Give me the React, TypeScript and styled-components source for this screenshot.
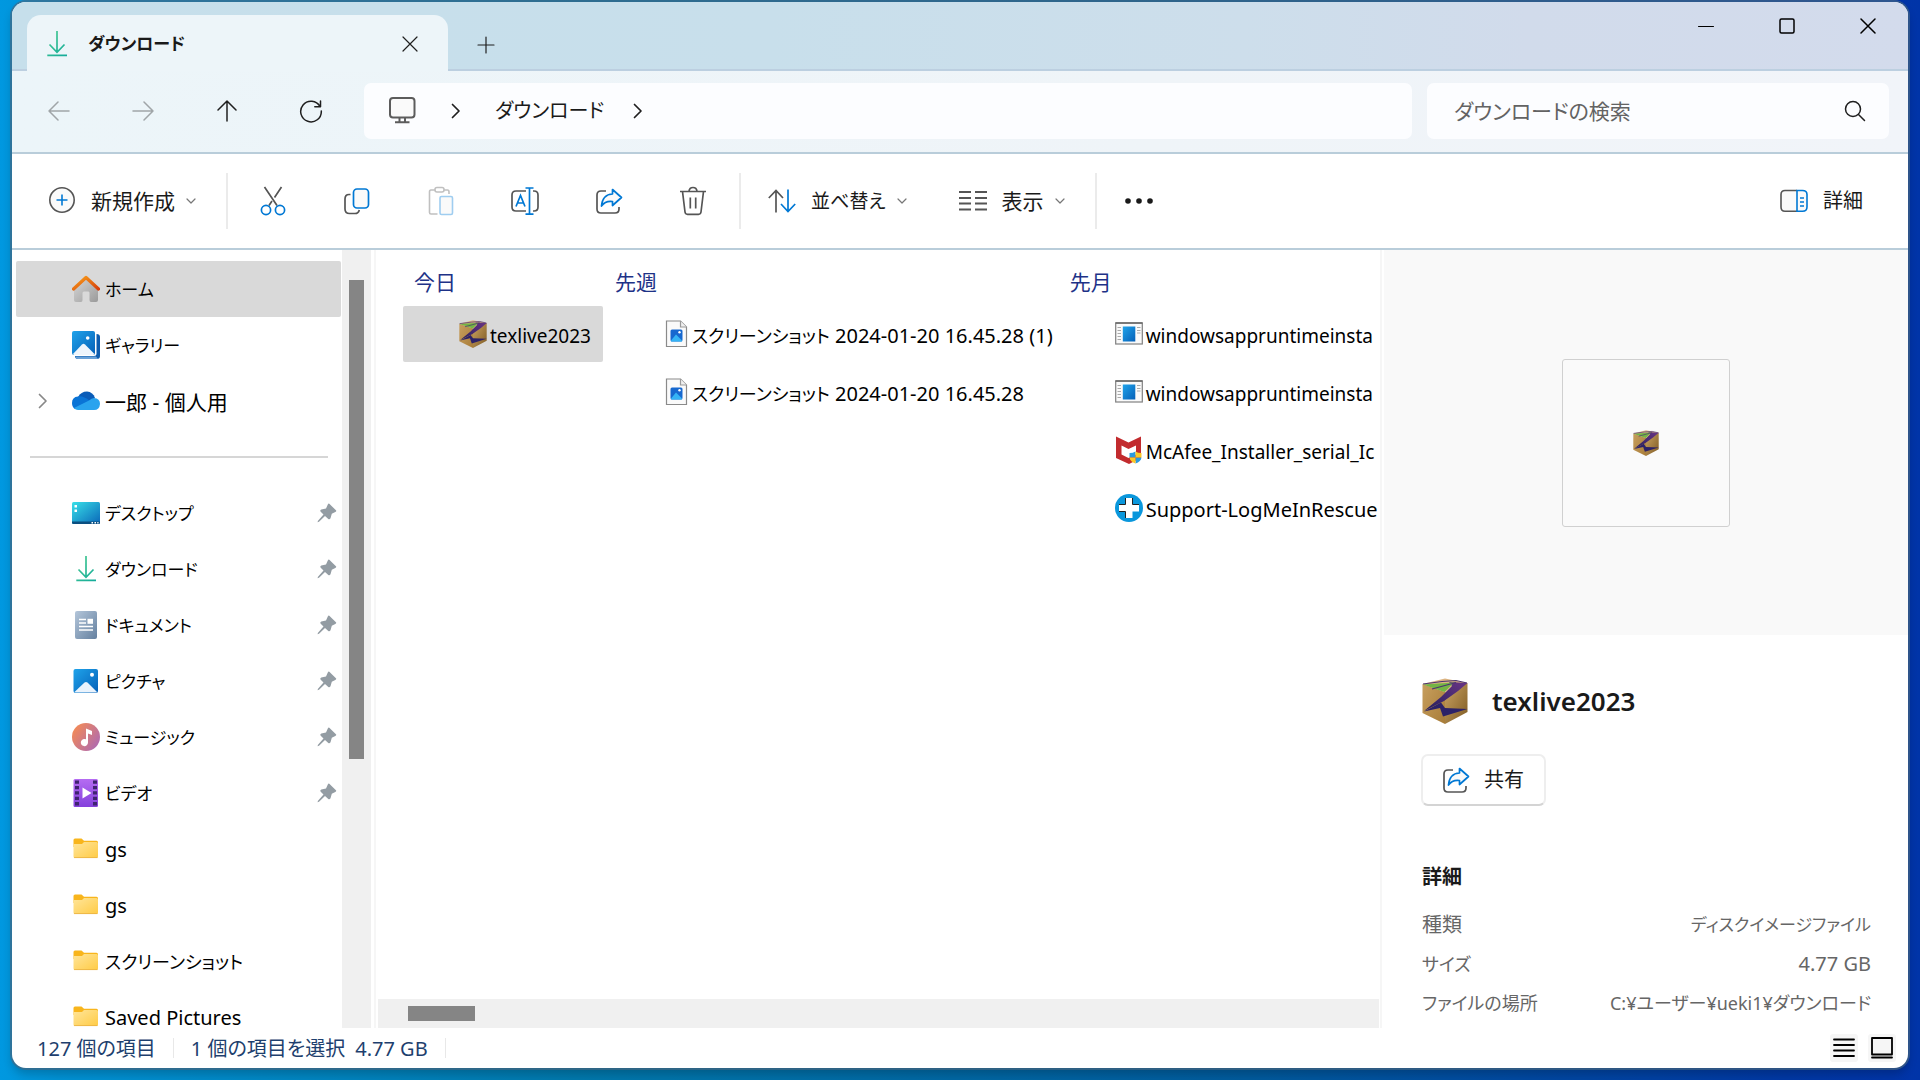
import React from 'react';
import styled, { createGlobalStyle } from 'styled-components';

const Global = createGlobalStyle`
  *, *::before, *::after { box-sizing: border-box; }
  html, body, #root { height: 100%; }
  body {
    margin: 0;
    overflow: hidden;
    font-family: 'Noto Sans', 'Noto Sans CJK JP', sans-serif;
    font-size: 19px;
    line-height: 28px;
    color: #1a1a1a;
    font-feature-settings: 'palt';
  }
  button, input { font: inherit; font-feature-settings: inherit; color: inherit; }
  button { background: none; border: 0; padding: 0; margin: 0; }
  ul, dl, dd, h2, h3 { margin: 0; padding: 0; }
  ul { list-style: none; }
  a { color: inherit; text-decoration: none; }
  svg { display: block; flex: none; }
`;

const Desktop = styled.div`
  height: 100vh;
  padding: 2px 12px 12px;
  background: linear-gradient(90deg, #0098e0 0%, #0091d4 3%, #0078ac 30%, #005a9c 65%, #0038a4 93%, #0034a8 100%);
`;

const Window = styled.div`
  height: 100%;
  display: flex;
  flex-direction: column;
  overflow: hidden;
  border-radius: 14px;
  background: #fff;
  box-shadow: 0 0 0 2px rgba(70, 105, 130, 0.65), 0 6px 10px rgba(0, 0, 0, 0.2);
`;

const TitleBar = styled.header`
  display: flex;
  height: 69px;
  padding-left: 15px;
  background: linear-gradient(90deg, #c6dfeb 0%, #c8dfeb 40%, #cddeeb 65%, #d1dbeb 80%, #d3dbec 100%);
  border-bottom: 2px solid #bccfe0;
`;

const Tab = styled.div`
  display: flex;
  align-items: center;
  width: 421px;
  height: 57px;
  margin-top: 13px;
  margin-bottom: -2px;
  padding: 0 26px 0 16px;
  border-radius: 14px 14px 0 0;
  background: #edf5f9;
  font-weight: 600;
  font-size: 17px;
`;

const TabName = styled.span`
  flex: 1;
  padding-left: 17px;
`;

const NewTab = styled.button`
  width: 48px;
  margin: 18px 0 0 14px;
  display: grid;
  place-items: center;
`;

const IconButton = styled.button<{ $w: number }>`
  width: ${(p) => p.$w}px;
  display: grid;
  place-items: center;
`;

const Captions = styled.div`
  margin-left: auto;
  display: flex;
  height: 48px;
`;

const NavBar = styled.nav`
  display: flex;
  align-items: center;
  height: 83px;
  padding: 0 19px 2px 5px;
  background: linear-gradient(90deg, #ecf5f9, #eff4f8 60%, #f1f4f9);
  border-bottom: 2px solid #b9cdda;
`;

const AddressBar = styled.div`
  flex: 1;
  display: flex;
  align-items: center;
  height: 56px;
  margin-left: 11px;
  padding-left: 24px;
  border-radius: 7px;
  background: #fcfdff;
  font-size: 20px;
`;

const Crumb = styled.a`
  margin: 0 29px 0 34px;
`;

const CrumbChevron = styled.span`
  margin-left: 35px;
`;

const SearchBox = styled.label`
  display: flex;
  align-items: center;
  width: 462px;
  height: 56px;
  margin-left: 15px;
  padding: 0 23px 0 25px;
  border-radius: 7px;
  background: #fcfdff;
`;

const SearchInput = styled.input`
  flex: 1;
  min-width: 0;
  border: 0;
  outline: 0;
  background: none;
  font-size: 21px;
  &::placeholder { color: #636363; opacity: 1; }
`;

const Toolbar = styled.div`
  display: flex;
  align-items: center;
  height: 96px;
  padding-right: 45px;
  border-bottom: 2px solid #b9cdda;
`;

const MenuButton = styled.button<{ $left: number; $size?: number }>`
  display: flex;
  align-items: center;
  height: 56px;
  padding: 0 30px 0 ${(p) => p.$left}px;
  font-size: ${(p) => p.$size ?? 21}px;
`;

const MenuLabel = styled.span`
  margin: 0 11px 0 15px;
`;

const Separator = styled.div`
  width: 2px;
  height: 56px;
  background: #ebebeb;
`;

const IconGroup = styled.div`
  display: flex;
  padding: 0 4px 0 3px;
`;

const DetailsToggle = styled.button`
  display: flex;
  align-items: center;
  gap: 15px;
  height: 56px;
  margin-left: auto;
  font-size: 20px;
`;

const Main = styled.main`
  flex: 1;
  min-height: 0;
  display: flex;
`;

const Sidebar = styled.aside`
  width: 330px;
  flex: none;
  padding: 11px 0 0 4px;
  overflow: hidden;
`;

const SideLink = styled.a<{ $active?: boolean }>`
  display: flex;
  align-items: center;
  width: 325px;
  height: 56px;
  padding: 0 4px 0 19px;
  border-radius: 2px;
  color: #000;
  background: ${(p) => (p.$active ? '#d9d9d9' : 'transparent')};
`;

const Expander = styled.span`
  width: 37px;
  padding-left: 3px;
`;

const SideName = styled.span<{ $size: number }>`
  flex: 1;
  padding: 2px 0 0 5px;
  font-size: ${(p) => p.$size}px;
  line-height: 20px;
`;

const Divider = styled.hr`
  width: 298px;
  margin: 27px 0 27px 14px;
  border: 0;
  height: 2px;
  background: #d6d6d6;
`;

const VTrack = styled.div`
  width: 29px;
  flex: none;
  padding: 30px 7px 0;
  background: #f0f0f0;
`;

const VThumb = styled.div`
  width: 15px;
  height: 479px;
  background: #858585;
`;

const Rule = styled.div<{ $before: number }>`
  width: 2px;
  flex: none;
  margin: 0 2px 0 ${(p) => p.$before}px;
  background: #f6f6f6;
`;

const Content = styled.section`
  flex: 1;
  min-width: 0;
  display: flex;
  flex-direction: column;
`;

const Groups = styled.div`
  flex: 1;
  display: flex;
  overflow: hidden;
  padding-left: 25px;
`;

const Group = styled.div`
  flex: none;
`;

const GroupTitle = styled.h3<{ $indent: number }>`
  margin: 18px 0 10px;
  padding-left: ${(p) => p.$indent}px;
  font-size: 21px;
  font-weight: 400;
  line-height: 28px;
  color: #1e3287;
`;

const FileRow = styled.a<{ $left: number; $right: number; $selected?: boolean }>`
  display: flex;
  align-items: center;
  height: 56px;
  margin-bottom: 2px;
  padding: 0 ${(p) => p.$right}px 0 ${(p) => p.$left}px;
  border-radius: 2px;
  white-space: nowrap;
  color: #000;
  background: ${(p) => (p.$selected ? '#d9d9d9' : 'transparent')};
`;

const FileName = styled.span<{ $size?: number }>`
  padding: 3px 0 0 3px;
  font-size: ${(p) => p.$size ?? 19}px;
`;

const Kana = styled.span`
  font-size: 18px;
`;

const HTrack = styled.div`
  height: 29px;
  padding: 7px 30px;
  background: #f0f0f0;
`;

const HThumb = styled.div`
  width: 67px;
  height: 15px;
  background: #858585;
`;

const Details = styled.aside`
  width: 524px;
  flex: none;
`;

const Preview = styled.div`
  display: grid;
  place-items: center;
  height: 385px;
  background: #f9f9f9;
`;

const Thumb = styled.div`
  display: grid;
  place-items: center;
  width: 168px;
  height: 168px;
  border: 1px solid #d0d0d0;
  border-radius: 3px;
  background: #fafafa;
`;

const Info = styled.div`
  padding: 41px 37px 0 38px;
`;

const Heading = styled.div`
  display: flex;
  align-items: center;
  gap: 24px;
  height: 50px;
`;

const Name = styled.h2`
  font-size: 26px;
  font-weight: 600;
  line-height: 36px;
`;

const ShareButton = styled.button`
  display: flex;
  align-items: center;
  gap: 14px;
  height: 52px;
  margin: 28px 0 57px -1px;
  padding: 0 20px 0 19px;
  border: 2px solid #eeeeee;
  border-bottom-color: #d4d4d4;
  border-radius: 7px;
  font-size: 20px;
`;

const SectionTitle = styled.h3`
  font-size: 20px;
  font-weight: 700;
  line-height: 28px;
`;

const Facts = styled.dl`
  margin-top: 14px;
  color: #666;
`;

const Fact = styled.div`
  display: flex;
  justify-content: space-between;
  height: 39px;
  align-items: center;
`;

const Term = styled.dt<{ $size: number }>`
  font-size: ${(p) => p.$size}px;
`;

const Value = styled.dd<{ $size: number }>`
  font-size: ${(p) => p.$size}px;
`;

const StatusBar = styled.footer`
  display: flex;
  align-items: center;
  height: 40px;
  padding: 0 12px 0 25px;
  font-size: 20px;
  color: #1e3f6e;
`;

const StatusItem = styled.span`
  display: flex;
  gap: 10px;
  padding: 2px 17px 0 0;
  margin-right: 17px;
  border-right: 1px solid #e8e8e8;
  line-height: 18px;
`;

const ViewButtons = styled.div`
  display: flex;
  gap: 10px;
  margin-left: auto;
`;

const ViewButton = styled.button`
  display: grid;
  place-items: center;
  width: 28px;
  height: 28px;
  border-radius: 3px;
  background: #f6f6f6;
`;

/* ---------- drawings ---------- */

const Line: React.FC<{ d: string; w: number; h: number; c?: string; s?: number }> = ({ d, w, h, c = '#1f1f1f', s = 1.5 }) => (
  <svg width={w} height={h} viewBox={`0 0 ${w} ${h}`} fill="none" stroke={c} strokeWidth={s} strokeLinecap="round" strokeLinejoin="round">
    <path d={d} />
  </svg>
);

const DownloadIcon = () => (
  <svg width="28" height="28" viewBox="0 0 28 28" fill="none" stroke="url(#dl)" strokeWidth="1.7">
    <defs>
      <linearGradient id="dl" x1="0" y1="0" x2="28" y2="28" gradientUnits="userSpaceOnUse">
        <stop offset="0" stopColor="#52d08f" /><stop offset="1" stopColor="#0ba69c" />
      </linearGradient>
    </defs>
    <path d="M14 1V22M6.5 14.5L14 22.3L21.5 14.5M4.3 25.3H24" />
  </svg>
);

const ChevronDown = () => <Line w={10} h={6} d="M1 1L5 5L9 1" c="#777" s={1.2} />;
const ChevronRight: React.FC<{ c?: string }> = ({ c }) => <Line w={10} h={16} d="M1.5 1.5L8 8L1.5 14.5" c={c} s={1.7} />;

const PlusCircle = () => (
  <svg width="28" height="28" viewBox="0 0 28 28" fill="none" strokeWidth="1.6">
    <circle cx="14" cy="13" r="12.2" stroke="#555" fill="#fafafa" />
    <path d="M14 7.5V18.5M8.5 13H19.5" stroke="#0078d4" />
  </svg>
);

const CutIcon = () => (
  <svg width="28" height="30" viewBox="0 0 28 30" fill="none" strokeWidth="1.7">
    <path d="M5.5 1L18 19.5M22.5 1L15.5 11.5M13 15L10 19.5" stroke="#555" />
    <circle cx="7" cy="24" r="4.6" stroke="#0078d4" />
    <circle cx="21" cy="24" r="4.6" stroke="#0078d4" />
  </svg>
);

const CopyIcon = () => (
  <svg width="28" height="28" viewBox="0 0 28 28" fill="none" strokeWidth="1.7">
    <path d="M7.5 7.5H6Q2 7.5 2 12V22Q2 26.5 6.5 26.5H12Q15.5 26.5 16.3 23" stroke="#555" />
    <rect x="10.5" y="2" width="15" height="19" rx="3.5" stroke="#0078d4" fill="#fafafa" />
  </svg>
);

const PasteIcon = () => (
  <svg width="28" height="30" viewBox="0 0 28 30" fill="none" strokeWidth="1.6">
    <path d="M8 4H4Q2.5 4 2.5 6V26.5Q2.5 28 4 28H10.5M17 4H20.5Q22 4 22 6V8" stroke="#c0c0c0" />
    <rect x="8" y="1.5" width="9" height="4.5" rx="2" stroke="#c0c0c0" />
    <rect x="13" y="10.5" width="12.5" height="18" rx="1.5" stroke="#9fcdf0" fill="#fafafa" />
  </svg>
);

const RenameIcon = () => (
  <svg width="28" height="28" viewBox="0 0 28 28" fill="none" strokeWidth="1.7">
    <path d="M15 4H5Q1 4 1 8V20Q1 24 5 24H15M22 4H23Q27 4 27 8V20Q27 24 23 24H22" stroke="#555" />
    <path d="M14.5 1H22.5M14.5 27.2H22.5M18.5 1V27" stroke="#0078d4" />
    <path d="M5 19.5L9.5 8.5L14 19.5M6.5 16H12.5" stroke="#0078d4" />
  </svg>
);

const ShareIcon = () => (
  <svg width="28" height="28" viewBox="0 0 28 28" fill="none" strokeWidth="1.7" strokeLinejoin="round">
    <path d="M11 4H6Q2 4 2 8V22Q2 26 6 26H20Q24 26 24 22V20" stroke="#555" />
    <path d="M17.5 2.5L26.5 10.5L17.5 18.5V14.500Q10.500 13.500 6.5 19Q7.5 7.500 17.5 7Z" stroke="#0078d4" fill="#fafafa" />
  </svg>
);

const TrashIcon = () => (
  <svg width="28" height="30" viewBox="0 0 28 30" fill="none" stroke="#555" strokeWidth="1.7">
    <path d="M1 5.5H27M10 5.2Q10.5 1.5 14 1.5T18 5.2M3.5 5.5L6 26Q6.3 28.3 8.5 28.3H19.5Q21.7 28.3 22 26L24.5 5.5M11.3 11.5V22.5M16.7 11.5V22.5" />
  </svg>
);

const SortIcon = () => (
  <svg width="28" height="24" viewBox="0 0 28 24" fill="none" strokeWidth="1.7">
    <path d="M8 23.5V2M0.8 9L8 1.5L15 9" stroke="#555" />
    <path d="M20 0.5V22M13 15L20 22.5L27.2 15" stroke="#0078d4" />
  </svg>
);

const ViewIcon = () => (
  <svg width="28" height="20" viewBox="0 0 28 20" fill="none" stroke="#555" strokeWidth="1.8">
    <path d="M0 1H12M0 7H12M0 12.500H12M0 18.500H12M16 1H28M16 7H28M16 12.500H28M16 18.500H28" />
  </svg>
);

const MoreIcon = () => (
  <svg width="30" height="8" viewBox="0 0 30 8" fill="#1a1a1a">
    <circle cx="4" cy="4" r="2.8" /><circle cx="15" cy="4" r="2.8" /><circle cx="26" cy="4" r="2.8" />
  </svg>
);

const PaneIcon = () => (
  <svg width="28" height="24" viewBox="0 0 28 24" fill="#fafafa" strokeWidth="1.6">
    <path d="M17 1.5H5Q1 1.5 1 5.5V18Q1 22.3 5 22.3H17" stroke="#555" />
    <path d="M17 1.5H22.5Q27 1.5 27 5.5V18Q27 22.3 22.5 22.3H17Z" stroke="#0078d4" />
    <path d="M20 9H24M20 13H24M20 17H24" stroke="#0078d4" />
  </svg>
);

const MonitorIcon = () => (
  <svg width="28" height="30" viewBox="0 0 28 30" fill="none" stroke="#5c5c5c" strokeWidth="2">
    <rect x="2" y="2" width="24.5" height="19.5" rx="3" fill="#fafafa" />
    <path d="M11.5 21.5V26M17 21.5V26M7 26.3H21.5" />
  </svg>
);

const HomeIcon = () => (
  <svg width="28" height="28" viewBox="0 0 28 28">
    <defs>
      <linearGradient id="hm" x1="0" y1="0" x2="1" y2="1"><stop offset="0" stopColor="#d8d8d8" /><stop offset="1" stopColor="#9a9a9a" /></linearGradient>
      <linearGradient id="hr" x1="0" y1="0" x2="1" y2="1"><stop offset="0" stopColor="#f9a11b" /><stop offset="1" stopColor="#d63f0c" /></linearGradient>
    </defs>
    <path d="M2 14L14 3L26 14V25Q26 27 24 27H19Q17.500 27 17.500 25V18Q17.500 16.500 16.500 16.500H12Q10.500 16.500 10.500 18V25Q10.500 27 9 27H4Q2 27 2 25Z" fill="url(#hm)" />
    <path d="M1.500 14L14 2.500L26.500 14" fill="none" stroke="url(#hr)" strokeWidth="3.300" strokeLinecap="round" strokeLinejoin="round" />
  </svg>
);

const BlueGradient: React.FC<{ id: string }> = ({ id }) => (
  <linearGradient id={id} x1="0" y1="0" x2="1" y2="1"><stop offset="0" stopColor="#1fa3ea" /><stop offset="1" stopColor="#0560b8" /></linearGradient>
);

const GalleryIcon = () => (
  <svg width="28" height="28" viewBox="0 0 28 28">
    <defs><BlueGradient id="ga" /></defs>
    <path d="M24.500 3Q28 3 28 6V25Q28 28 25 28H6Q3 28 3 25H22Q24.500 25 24.500 22.500Z" fill="#0d5cae" />
    <path d="M3.500 25.500H24L26 28H6Q3.500 28 3.500 25.500Z" fill="#6ba2d8" />
    <rect x="0" y="0" width="23" height="24" rx="2" fill="url(#ga)" />
    <path d="M1 23L10 13.500Q11.500 12 13 13.500L22.500 23Q22 24 21 24H2Z" fill="#eef5fc" />
    <circle cx="15.700" cy="7" r="1.800" fill="#fff" />
  </svg>
);

const CloudIcon = () => (
  <svg width="28" height="20" viewBox="0 0 28 20">
    <path d="M6 6Q9 0.500 15 0.500Q21 1 23 7L15 13Z" fill="#0a5cb8" />
    <path d="M6 5.500Q0 6 0 12Q0 16 3 18L18 10Q11 4.500 6 5.500Z" fill="#0a74d6" />
    <path d="M22 7Q28 7.500 28 13Q27.500 19 22 19H6Q3.500 19 2 17L17 9.500Q19.500 7 22 7Z" fill="#29a3ee" />
  </svg>
);

const DesktopIcon = () => (
  <svg width="28" height="22" viewBox="0 0 28 22">
    <defs><linearGradient id="dk" x1="0" y1="0" x2="1" y2="1"><stop offset="0" stopColor="#38e0e8" /><stop offset="1" stopColor="#0a66b8" /></linearGradient></defs>
    <rect width="28" height="22" rx="1.500" fill="url(#dk)" />
    <path d="M0 19.500H28V20.500Q28 22 26.500 22H1.500Q0 22 0 20.500Z" fill="#0b4f80" />
    <path d="M2.500 3H5V5.500H2.500ZM2.500 7.500H5V10H2.500ZM19.500 20H21V21.500H19.500ZM22.500 20H24V21.500H22.500ZM25.300 20H26.500V21.500H25.300Z" fill="#fff" />
  </svg>
);

const DocumentIcon = () => (
  <svg width="28" height="28" viewBox="0 0 28 28">
    <defs><linearGradient id="dc" x1="0" y1="0" x2="1" y2="1"><stop offset="0" stopColor="#b4c6da" /><stop offset="1" stopColor="#64809f" /></linearGradient></defs>
    <rect x="3" y="0" width="22" height="28" rx="2" fill="url(#dc)" />
    <path d="M7 8.500H14M7 12H14M7 15.500H21M7 19H21" stroke="#fff" strokeWidth="1.500" />
    <rect x="15.500" y="7.800" width="5.500" height="5" fill="#fff" />
  </svg>
);

const PictureIcon = () => (
  <svg width="28" height="28" viewBox="0 0 28 28">
    <defs><BlueGradient id="pi" /></defs>
    <rect x="1.500" y="2" width="24.500" height="24" rx="2" fill="url(#pi)" />
    <path d="M2.500 25L12.500 15.500Q14 14.300 15.500 15.500L25 25Q24.500 25.500 24 25.500H3.500Z" fill="#eaf3fc" />
    <circle cx="20" cy="7.800" r="2" fill="#fff" />
  </svg>
);

const MusicIcon = () => (
  <svg width="28" height="28" viewBox="0 0 28 28">
    <defs><linearGradient id="mu" x1="0" y1="0.200" x2="1" y2="0.900"><stop offset="0" stopColor="#f58b54" /><stop offset="1" stopColor="#a968b8" /></linearGradient></defs>
    <circle cx="14" cy="14" r="14" fill="url(#mu)" />
    <path d="M14 5.500L20 8V12L16 10.500V19.500A3.600 3.600 0 1 1 14 16.300Z" fill="#fff" />
  </svg>
);

const VideoIcon = () => (
  <svg width="28" height="28" viewBox="0 0 28 28">
    <defs><linearGradient id="vi" x1="0" y1="0" x2="0" y2="1"><stop offset="0" stopColor="#b56cf2" /><stop offset="1" stopColor="#8440dc" /></linearGradient></defs>
    <rect x="1.500" y="0" width="24.500" height="28" rx="1.500" fill="url(#vi)" />
    <path d="M5 1.500V28M23 1.500V28" stroke="#3f2370" strokeWidth="4" strokeDasharray="3.300 2.100" />
    <path d="M10.500 8.500L19.500 14L10.500 19.500Z" fill="#fff" />
  </svg>
);

const FolderIcon = () => (
  <svg width="28" height="22" viewBox="0 0 28 22">
    <defs><linearGradient id="fo" x1="0" y1="0" x2="1" y2="1"><stop offset="0" stopColor="#ffe59a" /><stop offset="1" stopColor="#ffcb45" /></linearGradient></defs>
    <path d="M1.500 2Q1.500 0.500 3 0.500H9.500L12 2.800H24.500Q26 2.800 26 4.300V9H1.500Z" fill="#f8b51c" />
    <path d="M1.500 6H10L12 4H24.500Q26 4 26 5.500V18.500Q26 20 24.500 20H3Q1.500 20 1.500 18.500Z" fill="url(#fo)" />
    <path d="M2 19.600H25.500" stroke="#e8b040" strokeWidth="0.800" />
  </svg>
);

const PinIcon = () => (
  <svg width="20" height="20" viewBox="0 0 20 20" fill="#939ca3">
    <path d="M12.300 0.800L19.200 7.500Q19.500 8.500 18.300 8.900L14.800 10.800L13.500 15.300Q12.500 17 11.300 16L8 13L2 18.800L0.500 19.300L1 17.800L6.500 11.500L3.500 8.500Q2.800 7.200 4.300 6.600L9 5.500L10.800 1.500Q11.500 0.200 12.300 0.800Z" />
  </svg>
);

const BoxIcon: React.FC<{ size: number }> = ({ size }) => (
  <svg width={size} height={size} viewBox="0 0 46 46">
    <defs>
      <linearGradient id="bl" x1="0" y1="0" x2="1" y2="1"><stop offset="0" stopColor="#c79f5e" /><stop offset="1" stopColor="#a87c38" /></linearGradient>
      <linearGradient id="br" x1="0" y1="0" x2="1" y2="1"><stop offset="0" stopColor="#cba463" /><stop offset="1" stopColor="#7d5922" /></linearGradient>
      <linearGradient id="bp" x1="1" y1="0" x2="0" y2="1"><stop offset="0" stopColor="#6a3585" /><stop offset="1" stopColor="#241f5c" /></linearGradient>
    </defs>
    <path d="M0.500 6L23 0.500L45.500 5L23 14Z" fill="#dcb482" />
    <path d="M0.500 6L23 14V46L0.500 35Z" fill="url(#bl)" />
    <path d="M23 14L45.500 5V34L23 46Z" fill="url(#br)" />
    <path d="M27 4L45.500 5L36 13L22 23L2 33L19 19L30 8Z" fill="url(#bp)" />
    <path d="M1 6.500L32 4.500L22.500 14L11 10Z" fill="#74b544" />
    <path d="M1 6L20 3.500L34 2.500L45 5M10 11L34 4.500" stroke="#4d3470" strokeWidth="1.200" fill="none" />
    <path d="M2 33.500L19 24.500L23 30L45.500 31L21 38.500L18 30Z" fill="#2c2268" />
  </svg>
);

const ImageFileIcon = () => (
  <svg width="24" height="28" viewBox="0 0 24 28">
    <path d="M1.500 1H15.500L21.500 7V26.500H1.500Z" fill="#fafafa" stroke="#8a8a8a" strokeWidth="1.200" />
    <path d="M15.500 1V7H21.500" fill="#f0f0f0" stroke="#9a9a9a" strokeWidth="1.200" />
    <rect x="5.500" y="9.500" width="12" height="12" rx="1.500" fill="#1668cf" />
    <path d="M6 20.500L11 14.500L17 20.500V21.500H6Z" fill="#35b4f5" />
    <circle cx="14.500" cy="12.300" r="1.200" fill="#fff" />
  </svg>
);

const AppFileIcon = () => (
  <svg width="28" height="28" viewBox="0 0 28 28">
    <defs><BlueGradient id="ap" /></defs>
    <rect x="0.700" y="3" width="26.600" height="21" fill="#fafafa" stroke="#808080" strokeWidth="1.200" />
    <path d="M0.500 3H27.500" stroke="#666" strokeWidth="1.500" />
    <rect x="7.800" y="6.500" width="12.500" height="15" fill="url(#ap)" />
    <path d="M2.500 7.500H6M2.500 10.500H6M2.500 13.500H6M2.500 16.500H6M2.500 19.500H6M22 7.500H25.500M22 10.500H25.500M22 13H25.500" stroke="#aaa" strokeWidth="1" />
  </svg>
);

const ShieldIcon = () => (
  <svg width="28" height="28" viewBox="0 0 28 28">
    <path d="M1 0.500L13.500 6.500L26 0.500V22L14 28L1 22ZM6.500 9.500V18.500L13.500 22L21 18.500V9.500L13.500 13Z" fill="#c22b2e" fillRule="evenodd" />
    <path d="M20.500 15.500V21.500H14.500V17Q18 17 20.500 15.500ZM20.500 21.500H26.500Q26 25.500 20.500 27.500Z" fill="#2b9be0" />
    <path d="M20.500 15.500Q23 17 26.500 17V21.500H20.500ZM14.500 21.500H20.500V27.500Q15 25.500 14.500 21.500Z" fill="#fbc926" />
  </svg>
);

const RescueIcon = () => (
  <svg width="28" height="28" viewBox="0 0 28 28">
    <circle cx="14" cy="14" r="14" fill="#0a97dc" />
    <path d="M10.500 4H17.500V10.500H24V17.500H17.500V24H10.500V17.500H4V10.500H10.500Z" fill="#fff" />
    <path d="M10.500 4V10.500H4M17.500 4V10.500H24M10.500 24V17.500H4" fill="none" stroke="#222" strokeWidth="1" />
  </svg>
);

/* ---------- data ---------- */

type SideItem = { name: string; icon: React.ReactNode; size?: number; active?: boolean; expand?: boolean; pinned?: boolean };

const topItems: SideItem[] = [
  { name: 'ホーム', icon: <HomeIcon />, active: true },
  { name: 'ギャラリー', icon: <GalleryIcon /> },
  { name: '一郎 - 個人用', icon: <CloudIcon />, size: 21, expand: true },
];

const quickItems: SideItem[] = [
  { name: 'デスクトップ', icon: <DesktopIcon />, pinned: true },
  { name: 'ダウンロード', icon: <DownloadIcon />, pinned: true },
  { name: 'ドキュメント', icon: <DocumentIcon />, pinned: true },
  { name: 'ピクチャ', icon: <PictureIcon />, pinned: true },
  { name: 'ミュージック', icon: <MusicIcon />, pinned: true },
  { name: 'ビデオ', icon: <VideoIcon />, pinned: true },
  { name: 'gs', icon: <FolderIcon />, size: 20 },
  { name: 'gs', icon: <FolderIcon />, size: 20 },
  { name: 'スクリーンショット', icon: <FolderIcon />, size: 18 },
  { name: 'Saved Pictures', icon: <FolderIcon />, size: 20 },
];

const facts = [
  { term: '種類', termSize: 20, value: 'ディスクイメージファイル', valueSize: 17 },
  { term: 'サイズ', termSize: 18, value: '4.77 GB', valueSize: 20 },
  { term: 'ファイルの場所', termSize: 18, value: 'C:¥ユーザー¥ueki1¥ダウンロード', valueSize: 18 },
];

const SideList: React.FC<{ items: SideItem[] }> = ({ items }) => (
  <ul>
    {items.map((it, i) => (
      <li key={i}>
        <SideLink href="#" $active={it.active}>
          <Expander>{it.expand && <ChevronRight c="#888" />}</Expander>
          {it.icon}
          <SideName $size={it.size ?? 17}>{it.name}</SideName>
          {it.pinned && <PinIcon />}
        </SideLink>
      </li>
    ))}
  </ul>
);

export default function App() {
  return (
    <>
      <Global />
      <Desktop>
        <Window>
          <TitleBar>
            <Tab>
              <DownloadIcon />
              <TabName>ダウンロード</TabName>
              <IconButton $w={24} aria-label="タブを閉じる"><Line w={16} h={16} d="M1 1L15 15M15 1L1 15" s={1.2} /></IconButton>
            </Tab>
            <NewTab aria-label="新しいタブ"><Line w={18} h={18} d="M9 1V17M1 9H17" s={1.2} /></NewTab>
            <Captions>
              <IconButton $w={81} aria-label="最小化"><Line w={16} h={16} d="M0.5 8.5H15.5" c="#000" s={1} /></IconButton>
              <IconButton $w={81} aria-label="最大化"><Line w={16} h={16} d="M2.500 1H13.500Q15 1 15 2.500V13.500Q15 15 13.500 15H2.500Q1 15 1 13.500V2.500Q1 1 2.500 1Z" c="#000" /></IconButton>
              <IconButton $w={81} aria-label="閉じる"><Line w={16} h={16} d="M1 1L15 15M15 1L1 15" c="#000" /></IconButton>
            </Captions>
          </TitleBar>

          <NavBar>
            <IconButton $w={84} aria-label="戻る"><Line w={22} h={20} d="M21 10H1M10 1L1 10L10 19" c="#a0a5a8" /></IconButton>
            <IconButton $w={84} aria-label="進む"><Line w={22} h={20} d="M1 10H21M12 1L21 10L12 19" c="#a0a5a8" /></IconButton>
            <IconButton $w={84} aria-label="上へ"><Line w={20} h={22} d="M10 21V1M1 10L10 1L19 10" /></IconButton>
            <IconButton $w={84} aria-label="更新"><Line w={24} h={24} d="M21 7.500A10.300 10.300 0 1 0 22.300 12M21.500 2V7.700H15.800" /></IconButton>
            <AddressBar>
              <MonitorIcon />
              <CrumbChevron><ChevronRight /></CrumbChevron>
              <Crumb href="#">ダウンロード</Crumb>
              <ChevronRight />
            </AddressBar>
            <SearchBox>
              <SearchInput type="search" aria-label="ダウンロードの検索" placeholder="ダウンロードの検索" />
              <Line w={22} h={22} d="M16.500 9A7.500 7.500 0 1 1 1.500 9A7.500 7.500 0 1 1 16.500 9M14.500 14.500L20.500 20.500" />
            </SearchBox>
          </NavBar>

          <Toolbar>
            <MenuButton $left={36}><PlusCircle /><MenuLabel>新規作成</MenuLabel><ChevronDown /></MenuButton>
            <Separator />
            <IconGroup>
              <IconButton $w={84} aria-label="切り取り"><CutIcon /></IconButton>
              <IconButton $w={84} aria-label="コピー"><CopyIcon /></IconButton>
              <IconButton $w={84} aria-label="貼り付け"><PasteIcon /></IconButton>
              <IconButton $w={84} aria-label="名前の変更"><RenameIcon /></IconButton>
              <IconButton $w={84} aria-label="共有"><ShareIcon /></IconButton>
              <IconButton $w={84} aria-label="削除"><TrashIcon /></IconButton>
            </IconGroup>
            <Separator />
            <MenuButton $left={27} $size={19}><SortIcon /><MenuLabel>並べ替え</MenuLabel><ChevronDown /></MenuButton>
            <MenuButton $left={22}><ViewIcon /><MenuLabel>表示</MenuLabel><ChevronDown /></MenuButton>
            <Separator />
            <IconButton $w={84} aria-label="その他"><MoreIcon /></IconButton>
            <DetailsToggle><PaneIcon />詳細</DetailsToggle>
          </Toolbar>

          <Main>
            <Sidebar>
              <SideList items={topItems} />
              <Divider />
              <SideList items={quickItems} />
            </Sidebar>
            <VTrack><VThumb /></VTrack>
            <Rule $before={3} />
            <Content>
              <Groups>
                <Group>
                  <GroupTitle $indent={11}>今日</GroupTitle>
                  <FileRow href="#" $left={56} $right={12} $selected><BoxIcon size={28} /><FileName>texlive2023</FileName></FileRow>
                </Group>
                <Group>
                  <GroupTitle $indent={12}>先週</GroupTitle>
                  <FileRow href="#" $left={62} $right={6}><ImageFileIcon /><FileName $size={20}><Kana>スクリーンショット</Kana> 2024-01-20 16.45.28 (1)</FileName></FileRow>
                  <FileRow href="#" $left={62} $right={6}><ImageFileIcon /><FileName $size={20}><Kana>スクリーンショット</Kana> 2024-01-20 16.45.28</FileName></FileRow>
                </Group>
                <Group>
                  <GroupTitle $indent={11}>先月</GroupTitle>
                  <FileRow href="#" $left={56} $right={0}><AppFileIcon /><FileName>windowsappruntimeinsta</FileName></FileRow>
                  <FileRow href="#" $left={56} $right={0}><AppFileIcon /><FileName>windowsappruntimeinsta</FileName></FileRow>
                  <FileRow href="#" $left={56} $right={0}><ShieldIcon /><FileName>McAfee_Installer_serial_Ic</FileName></FileRow>
                  <FileRow href="#" $left={56} $right={0}><RescueIcon /><FileName $size={20}>Support-LogMeInRescue</FileName></FileRow>
                </Group>
              </Groups>
              <HTrack><HThumb /></HTrack>
            </Content>
            <Rule $before={1} />
            <Details>
              <Preview><Thumb><BoxIcon size={26} /></Thumb></Preview>
              <Info>
                <Heading><BoxIcon size={46} /><Name>texlive2023</Name></Heading>
                <ShareButton><ShareIcon />共有</ShareButton>
                <SectionTitle>詳細</SectionTitle>
                <Facts>
                  {facts.map((f) => (
                    <Fact key={f.term}>
                      <Term $size={f.termSize}>{f.term}</Term>
                      <Value $size={f.valueSize}>{f.value}</Value>
                    </Fact>
                  ))}
                </Facts>
              </Info>
            </Details>
          </Main>

          <StatusBar>
            <StatusItem>127 個の項目</StatusItem>
            <StatusItem><span>1 個の項目を選択</span><span>4.77 GB</span></StatusItem>
            <ViewButtons>
              <ViewButton aria-label="詳細表示"><Line w={22} h={20} d="M1 1.500H21M1 7H21M1 12.500H21M1 18H21" c="#000" s={1.8} /></ViewButton>
              <ViewButton aria-label="大アイコン表示"><Line w={22} h={22} d="M1 1H21V17.500H1ZM1 20.500H21" c="#000" s={1.8} /></ViewButton>
            </ViewButtons>
          </StatusBar>
        </Window>
      </Desktop>
    </>
  );
}
